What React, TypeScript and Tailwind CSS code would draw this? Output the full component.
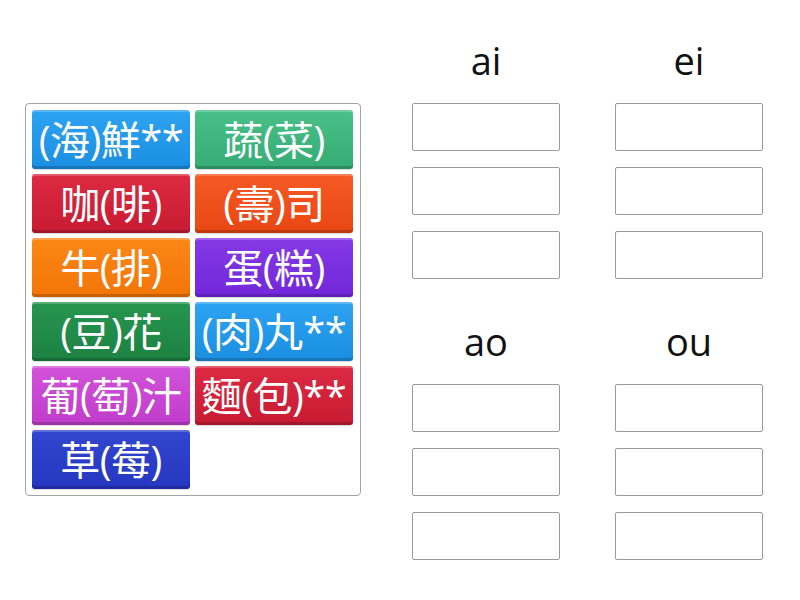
import React from 'react';

const font = { fontFamily: '"Open Sans", "Noto Sans CJK TC", sans-serif' };

interface Tile {
  label: string;
  className: string;
}

const tiles: Tile[] = [
  { label: '(海)鮮**', className: 'bg-linear-to-b from-[#2ea3f2] to-[#1a8ee0]' },
  { label: '蔬(菜)', className: 'bg-linear-to-b from-[#48c088] to-[#34ac74]' },
  { label: '咖(啡)', className: 'bg-linear-to-b from-[#dc2a42] to-[#c81a32]' },
  { label: '(壽)司', className: 'bg-linear-to-b from-[#f65a24] to-[#e94612]' },
  { label: '牛(排)', className: 'bg-linear-to-b from-[#fb8716] to-[#f27506]' },
  { label: '蛋(糕)', className: 'bg-linear-to-b from-[#8538e6] to-[#7228da]' },
  { label: '(豆)花', className: 'bg-linear-to-b from-[#279550] to-[#1c8242]' },
  { label: '(肉)丸**', className: 'bg-linear-to-b from-[#2ea3f2] to-[#1a8ee0]' },
  { label: '葡(萄)汁', className: 'bg-linear-to-b from-[#d252da] to-[#c03ccb]' },
  { label: '麵(包)**', className: 'bg-linear-to-b from-[#dc2a42] to-[#c81a32]' },
  { label: '草(莓)', className: 'bg-linear-to-b from-[#3246d0] to-[#2636c0]' },
];

const groups = ['ai', 'ei', 'ao', 'ou'];

const App: React.FC = () => {
  return (
    <div className="w-[800px] h-[600px] bg-white flex items-start" style={font}>
      {/* Tile bank */}
      <div className="ml-[25px] mt-[103px] w-[336px] h-[393px] border border-[#a3a3a3] rounded-[4px] p-[6px]">
        <div className="grid grid-cols-[158px_158px] gap-x-[5px] gap-y-[5px]">
          {tiles.map((t) => (
            <div
              key={t.label}
              className={`h-[59px] rounded-[3px] flex items-center justify-center text-white text-[40px] leading-none whitespace-nowrap tracking-[-0.5px] shadow-[inset_0_2px_0_rgba(255,255,255,0.22),inset_0_-3px_0_rgba(0,0,0,0.18),0_1px_1px_rgba(0,0,0,0.15)] ${t.className}`}
            >
              {t.label}
            </div>
          ))}
        </div>
      </div>

      {/* Drop groups */}
      <div className="ml-[51px] mt-[42px] grid grid-cols-[148px_148px] gap-x-[55px] gap-y-[44px]">
        {groups.map((g) => (
          <div key={g} className="flex flex-col">
            <div className="h-[36px] mb-[25px] text-[38px] leading-[36px] text-center text-[#111]">{g}</div>
            <div className="flex flex-col gap-[16px]">
              {[0, 1, 2].map((i) => (
                <div key={i} className="h-[48px] border border-[#9a9a9a] rounded-[2px] bg-white" />
              ))}
            </div>
          </div>
        ))}
      </div>
    </div>
  );
};

export default App;
